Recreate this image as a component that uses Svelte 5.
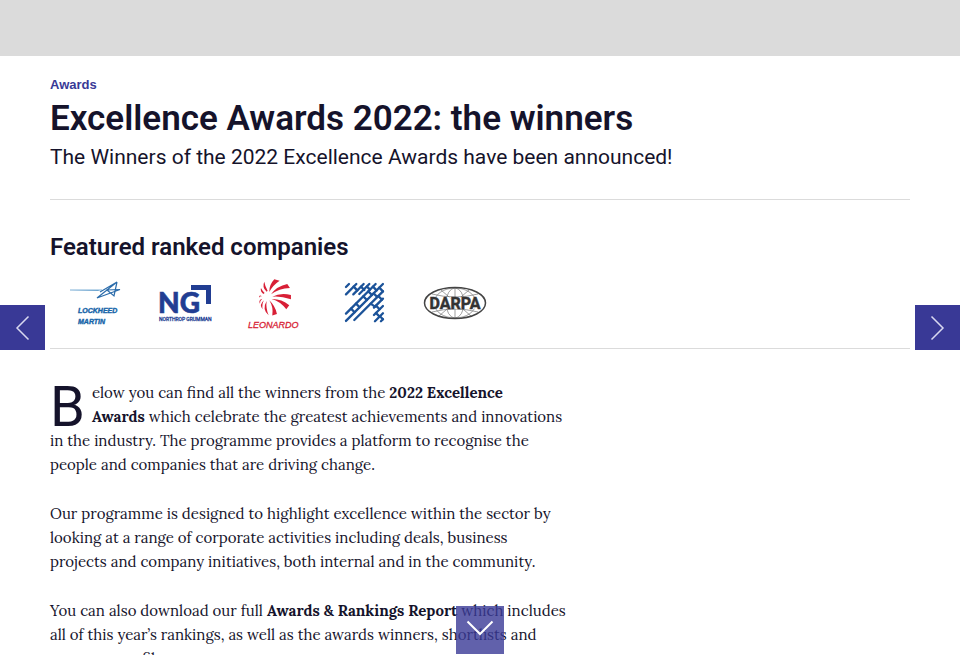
<script lang="ts">
	const title = 'Excellence Awards 2022: the winners';
	const standfirst = 'The Winners of the 2022 Excellence Awards have been announced!';

	function scrollOn() {
		window.scrollBy({ top: window.innerHeight, behavior: 'smooth' });
	}
</script>

<div class="topbar"></div>

<main>
	<header>
		<a class="category" href="#awards">Awards</a>
		<h1>{title}</h1>
		<p class="standfirst">{standfirst}</p>
	</header>

	<section class="companies">
		<h2>Featured ranked companies</h2>
		<div class="logos">
			<a href="#lockheed-martin" aria-label="Lockheed Martin">
				<svg width="90" height="60" viewBox="0 0 90 60">
					<path d="M15 17H45L43 18Z" fill="#5b98c9" />
					<path d="M15 17H47" stroke="#7fb0d6" stroke-width="1" />
					<path d="M62 9 42 25l23-8.500L51 17M62 9l-3 14-7-6M45 19 62 9" fill="none" stroke="#2b6cab" stroke-width="1.200" />
					<g fill="#1765a9" stroke="#1765a9" stroke-width="0.400" font-family="Liberation Sans, sans-serif" font-size="7" font-weight="700" font-style="italic">
						<text x="23" y="40">LOCKHEED</text>
						<text x="23" y="51">MARTIN</text>
					</g>
				</svg>
			</a>
			<a href="#northrop-grumman" aria-label="Northrop Grumman">
				<svg width="90" height="60" viewBox="0 0 90 60">
					<path d="M46 12H66V31H61V17H46Z" fill="#213d92" />
					<text x="13" y="40" fill="#213d92" stroke="#213d92" stroke-width="0.600" font-family="Lato, sans-serif" font-size="28" font-weight="900">NG</text>
					<text x="14" y="48" fill="#213d92" stroke="#213d92" stroke-width="0.300" font-family="Roboto, sans-serif" font-size="5">NORTHROP GRUMMAN</text>
				</svg>
			</a>
			<a href="#leonardo" aria-label="Leonardo">
				<svg width="86" height="60" viewBox="0 0 86 60">
					<g fill="#d81f36" transform="translate(0 -3) scale(0.333)">
						<path d="M95 65Q80 52 88 35Q90 48 98 62Z" />
						<path d="M103 66Q102 45 118 28L134 32Q113 46 103 66Z" />
						<path d="M108 73Q126 48 157 42L165 54Q132 55 108 73Z" />
						<path d="M112 80Q136 68 168 75L168 88Q136 77 112 80Z" />
						<path d="M110 87Q139 86 163 106L154 118Q136 94 110 87Z" />
						<path d="M103 91Q121 108 126 132L112 137Q116 112 103 91Z" />
						<path d="M95 93Q92 114 101 136Q80 118 95 93Z" />
						<path d="M87 91Q80 102 83 118Q71 104 87 91Z" />
						<path d="M82 86Q75 91 75 101Q69 90 82 86Z" />
						<path d="M81 79Q75 78 72 83Q72 73 81 79Z" />
						<path d="M85 72Q75 64 78 54Q82 62 89 69Z" />
					</g>
					<text x="13" y="55" fill="#d81f36" stroke="#d81f36" stroke-width="0.300" font-family="Liberation Sans, sans-serif" font-size="9" font-style="italic">LEONARDO</text>
				</svg>
			</a>
			<a href="#industry-group" aria-label="Industry group">
				<svg width="90" height="60" viewBox="0 0 90 60">
					<g transform="translate(4 -3) scale(0.333)" fill="none" stroke="#1c5399" stroke-width="7" stroke-linecap="round">
						<path d="M63 51 72 42M63 73 94 42M85 73 116 42M103 72 133 42M63 131 152 42M63 153 174 42M88 150 174 64M147 113 174 86M147 135 174 108M150 154 174 130M168 154 174 148" />
						<path d="M86 50 97 61M108 50 118 60M126 50 135 59M144 50 155 61M163 53 174 64M115 79 126 90M130 64 141 75M93 101 104 112M78 116 89 127M146 70 157 81M160 78 171 89M137 101 150 110M153 107 164 118M153 129 164 140M165 139 174 148" />
					</g>
				</svg>
			</a>
			<a href="#darpa" aria-label="DARPA">
				<svg width="90" height="60" viewBox="0 0 90 60">
					<g fill="none" stroke="#777" stroke-width="0.700">
						<ellipse cx="44" cy="30" rx="9" ry="15" />
						<ellipse cx="44" cy="30" rx="21" ry="15" />
						<path d="M44 15V45M21 21Q44 27 67 21M21 39Q44 33 67 39M30 17 60 43M58 17 28 43" />
					</g>
					<ellipse cx="44" cy="30" rx="30.500" ry="15.500" fill="none" stroke="#444" stroke-width="1.500" />
					<path d="M20 24H68V36H20Z" fill="#fff" fill-opacity="0.650" />
					<text x="44" y="36" text-anchor="middle" fill="#333" stroke="#333" stroke-width="0.500" font-family="Roboto, sans-serif" font-size="16" font-weight="700">DARPA</text>
				</svg>
			</a>
		</div>
	</section>

	<article>
		<p class="intro">
			Below you can find all the winners from the <strong>2022 Excellence Awards</strong>&nbsp;which
			celebrate the greatest achievements and innovations in the industry. The programme provides a
			platform to recognise the people and companies that are driving change.
		</p>
		<p>
			Our programme is designed to highlight excellence within the sector by looking at a range of
			corporate activities including deals, business projects and company initiatives, both internal
			and in the community.
		</p>
		<p>
			You can also download our full <strong>Awards &amp; Rankings Report</strong> which includes all
			of this year’s rankings, as well as the awards winners, shortlists and company profiles.
		</p>
	</article>
</main>

<button class="nav prev" aria-label="Previous page">
	<svg width="45" height="45" viewBox="0 0 45 45"><path d="M28.500 11.500 17 23l11.500 11.500" /></svg>
</button>
<button class="nav next" aria-label="Next page">
	<svg width="45" height="45" viewBox="0 0 45 45"><path d="M16.500 11.500 28 23 16.500 34.500" /></svg>
</button>
<button class="down" aria-label="Scroll down" onclick={scrollOn}>
	<svg width="48" height="48" viewBox="0 0 48 48"><path d="M11.500 15.500 24 28l12.500-12.500" /></svg>
</button>

<style>
	:global(body) {
		background: #fff;
		color: #15132b;
	}

	.topbar {
		height: 56px;
		background: #dbdbdb;
	}

	main {
		padding: 20px 50px;
		font-family: Roboto, 'Liberation Sans', sans-serif;
	}

	header {
		padding-bottom: 27px;
		border-bottom: 1px solid #dbdbdb;
	}

	.category {
		display: block;
		color: #393996;
		font-family: 'Liberation Sans', sans-serif;
		font-size: 13px;
		font-weight: 700;
		line-height: 18px;
		text-decoration: none;
	}

	h1 {
		margin: 0;
		font-size: 35px;
		font-weight: 600;
		line-height: 49px;
	}

	.standfirst {
		margin: 0;
		font-size: 21px;
		line-height: 29px;
	}

	.companies {
		padding-top: 32px;
		border-bottom: 1px solid #dbdbdb;
	}

	h2 {
		margin: 0;
		font-size: 24px;
		font-weight: 600;
		line-height: 30px;
	}

	.logos {
		display: flex;
		flex-wrap: wrap;
		padding: 11px 0 15px 5px;
	}

	.logos a {
		display: block;
	}

	.logos svg,
	button svg {
		display: block;
	}

	article {
		max-width: 517px;
		padding-top: 32px;
		font-family: Lora, 'Liberation Serif', serif;
		font-size: 15px;
		line-height: 24px;
	}

	article p {
		margin: 0 0 25px;
	}

	.intro::first-letter {
		float: left;
		padding: 5px 7px 0 0;
		font-family: Roboto, 'Liberation Sans', sans-serif;
		font-size: 56px;
		line-height: 43px;
	}

	button {
		position: fixed;
		padding: 0;
		border: 0;
		background: #393996;
		cursor: pointer;
	}

	button path {
		fill: none;
		stroke: #d8d8f0;
		stroke-width: 1.5;
	}

	.nav {
		top: calc(50% - 23px);
	}

	.prev {
		left: 0;
	}

	.next {
		right: 0;
	}

	.down {
		bottom: 1px;
		left: calc(50% - 24px);
		background: rgba(57, 57, 150, 0.8);
	}

	.down path {
		stroke: #fff;
		stroke-width: 2;
	}
</style>
